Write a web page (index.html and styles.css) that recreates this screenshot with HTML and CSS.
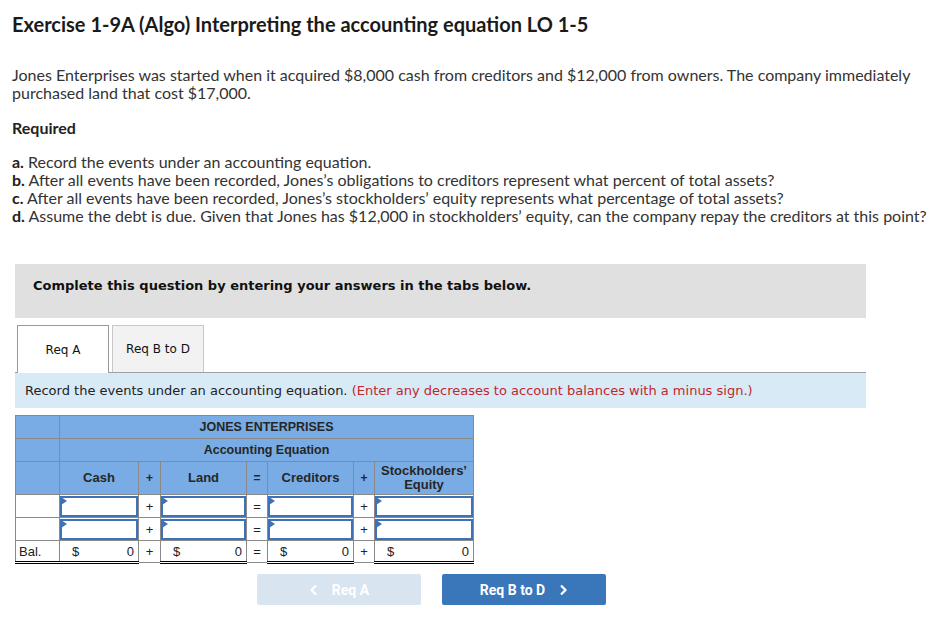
FILE: index.html
```html
<!DOCTYPE html>
<html>
<head>
<meta charset="utf-8">
<link rel="stylesheet" href="styles.css">
</head>
<body>
<div class="page">
  <h1 class="title">Exercise 1-9A (Algo) Interpreting the accounting equation LO 1-5</h1>
  <p class="intro">Jones Enterprises was started when it acquired $8,000 cash from creditors and $12,000 from owners. The company immediately purchased land that cost $17,000.</p>
  <p class="req">Required</p>
  <div class="parts">
    <div><b>a.</b> Record the events under an accounting equation.</div>
    <div><b>b.</b> After all events have been recorded, Jones’s obligations to creditors represent what percent of total assets?</div>
    <div><b>c.</b> After all events have been recorded, Jones’s stockholders’ equity represents what percentage of total assets?</div>
    <div><b>d.</b> Assume the debt is due. Given that Jones has $12,000 in stockholders’ equity, can the company repay the creditors at this point?</div>
  </div>

  <section class="quiz">
    <div class="notice">Complete this question by entering your answers in the tabs below.</div>
    <div class="tabs">
      <div class="tab active">Req A</div>
      <div class="tab">Req B to D</div>
    </div>
    <div class="instr">Record the events under an accounting equation. <span class="red">(Enter any decreases to account balances with a minus sign.)</span></div>

    <table class="eq">
      <colgroup>
        <col class="c-lab"><col class="c-cash"><col class="c-op1"><col class="c-val"><col class="c-op"><col class="c-val"><col class="c-op"><col class="c-se">
      </colgroup>
      <tr class="h1"><th></th><th colspan="7">JONES ENTERPRISES</th></tr>
      <tr class="h1"><th></th><th colspan="7">Accounting Equation</th></tr>
      <tr class="h2"><th></th><th>Cash</th><th class="hop">+</th><th>Land</th><th class="hop">=</th><th>Creditors</th><th class="hop">+</th><th>Stockholders’<br>Equity</th></tr>
      <tr class="row">
        <td></td>
        <td class="in"><div class="box"><input type="text"></div></td><td class="op">+</td>
        <td class="in"><div class="box"><input type="text"></div></td><td class="op">=</td>
        <td class="in"><div class="box"><input type="text"></div></td><td class="op">+</td>
        <td class="in"><div class="box"><input type="text"></div></td>
      </tr>
      <tr class="row">
        <td></td>
        <td class="in"><div class="box"><input type="text"></div></td><td class="op">+</td>
        <td class="in"><div class="box"><input type="text"></div></td><td class="op">=</td>
        <td class="in"><div class="box"><input type="text"></div></td><td class="op">+</td>
        <td class="in"><div class="box"><input type="text"></div></td>
      </tr>
      <tr class="bal">
        <td class="lab">Bal.</td>
        <td class="amt"><span>$</span><span>0</span></td><td class="op">+</td>
        <td class="amt"><span>$</span><span>0</span></td><td class="op">=</td>
        <td class="amt"><span>$</span><span>0</span></td><td class="op">+</td>
        <td class="amt"><span>$</span><span>0</span></td>
      </tr>
    </table>

    <div class="nav">
      <button class="btn prev" disabled>
        <svg class="chev" width="9" height="12" viewBox="0 0 9 12"><path d="M7 1.5 L2.5 6 L7 10.5" fill="none" stroke="currentColor" stroke-width="2.2"/></svg>
        <span>Req A</span>
      </button>
      <button class="btn next">
        <span>Req B to D</span>
        <svg class="chev" width="9" height="12" viewBox="0 0 9 12"><path d="M2 1.5 L6.5 6 L2 10.5" fill="none" stroke="currentColor" stroke-width="2.2"/></svg>
      </button>
    </div>
  </section>
</div>
</body>
</html>
```

FILE: styles.css
```css
* { box-sizing: border-box; }
body { margin: 0; background: #fff; }
.page {
  padding: 12px 0 0 12px;
  width: 935px;
  font-family: Lato, "Noto Sans", sans-serif;
  color: #222;
}
.title {
  margin: 0;
  font-size: 20px;
  line-height: 24px;
  font-weight: 700;
  color: #1a1a1a;
}
.intro {
  margin: 30px 0 0;
  font-size: 16px;
  line-height: 18px;
  color: #333;
}
.req {
  margin: 17px 0 0;
  font-size: 16px;
  line-height: 18px;
  font-weight: 700;
  color: #222;
}
.parts {
  margin-top: 16px;
  font-size: 16px;
  line-height: 18px;
  color: #333;
}
.parts b { color: #222; }

.quiz {
  margin: 39px 0 0 3px;
  width: 851px;
}
.notice {
  height: 54px;
  background: #e0e0e0;
  padding: 14px 0 0 18px;
  font-family: "DejaVu Sans", Verdana, sans-serif;
  font-size: 13px;
  line-height: 16px;
  font-weight: 700;
  color: #111;
}
.tabs {
  margin-top: 7px;
  display: flex;
  align-items: flex-start;
  gap: 3px;
  padding-left: 2px;
  border-bottom: 1px solid #a0a0a0;
}
.tab {
  width: 92px;
  height: 47px;
  display: flex;
  align-items: center;
  justify-content: center;
  font-family: "DejaVu Sans", Verdana, sans-serif;
  font-size: 12px;
  color: #111;
  background: #f2f2f2;
  border: 1px solid #c8c8c8;
  border-bottom: none;
}
.tab.active {
  background: #fff;
  border-color: #9a9a9a;
  height: 48px;
  margin-bottom: -1px;
}
.instr {
  height: 35px;
  background: #d9eaf7;
  padding: 10px 0 0 10px;
  font-family: "DejaVu Sans", Verdana, sans-serif;
  font-size: 13px;
  line-height: 16px;
  color: #222;
}
.red { color: #c1272d; }

.eq {
  margin-top: 7px;
  border-collapse: collapse;
  table-layout: fixed;
  width: 458px;
  font-family: "Liberation Sans", Arial, sans-serif;
  font-size: 13px;
  color: #222;
}
.c-lab { width: 44px; }
.c-cash { width: 79px; }
.c-op1 { width: 22px; }
.c-op { width: 21px; }
.c-val { width: 86px; }
.c-se { width: 99px; }
.eq th, .eq td {
  border: 1px solid #8a8a8a;
  padding: 0;
}
.eq th {
  background: #79ace4;
  font-weight: 700;
  color: #262626;
  text-align: center;
}
.h1 th { height: 23px; font-size: 12.5px; }
.h2 th { height: 33px; line-height: 14px; }
.h2 th.hop { font-size: 12px; }
.row td { height: 23px; background: #fff; }
.op { text-align: center; font-size: 13px; }
.in { position: relative; }
.box {
  position: relative;
  height: 21px;
  border: 2px solid #3e72b8;
}
.box::before {
  content: "";
  position: absolute;
  left: -1px;
  top: -1px;
  border-style: solid;
  border-width: 4px 0 4px 6px;
  border-color: transparent transparent transparent #3e72b8;
}
.box input {
  display: block;
  width: 100%;
  height: 100%;
  border: 0;
  padding: 0;
  outline: none;
  background: #fff;
}
.bal td {
  height: 22px;
  border-top: 1px solid #000;
  border-bottom: 3px double #000;
  font-size: 13px;
}
.bal td.op { border-top-color: #8a8a8a; border-bottom: 1px solid #8a8a8a; }
.lab { padding-left: 3px !important; }
.amt span:first-child { float: left; padding-left: 12px; }
.amt span:last-child { float: right; padding-right: 4px; }

.nav {
  margin-top: 10px;
  display: flex;
  gap: 21px;
  padding-left: 242px;
}
.btn {
  width: 164px;
  height: 31px;
  border: 0;
  border-radius: 2px;
  font-family: Roboto, "Liberation Sans", sans-serif;
  font-size: 14px;
  font-weight: 700;
  color: #fff;
  display: flex;
  align-items: center;
  justify-content: center;
  gap: 14px;
  padding: 0;
}
.btn.prev { background: #d9e4f1; color: #fff; }
.btn.next { background: #3a76ba; }
.chev { display: block; }
```
